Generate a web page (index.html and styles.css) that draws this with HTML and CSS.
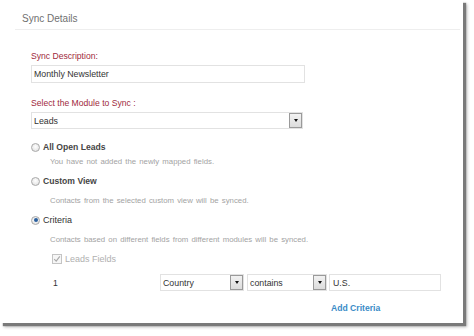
FILE: index.html
```html
<!DOCTYPE html>
<html>
<head>
<meta charset="utf-8">
<link rel="stylesheet" href="styles.css">
</head>
<body>
<div class="panel">
  <div class="header"><span class="title">Sync Details</span></div>
  <div class="form">
    <div class="label first">Sync Description:</div>
    <div class="input wide"><span>Monthly Newsletter</span></div>
    <div class="label second">Select the Module to Sync :</div>
    <div class="select module"><span class="val">Leads</span><span class="arrow"></span></div>

    <div class="radio-row r1"><span class="radio"></span><span class="rlabel">All Open Leads</span></div>
    <div class="desc">You have not added the newly mapped fields.</div>

    <div class="radio-row r2"><span class="radio"></span><span class="rlabel">Custom View</span></div>
    <div class="desc d2">Contacts from the selected custom view will be synced.</div>

    <div class="radio-row r2"><span class="radio checked"></span><span class="rlabel normal">Criteria</span></div>
    <div class="desc d3">Contacts based on different fields from different modules will be synced.</div>

    <div class="check-row"><span class="check"><svg width="8" height="8" viewBox="0 0 8 8"><path d="M1.2 4.2 L3.2 6.2 L6.8 1.4" fill="none" stroke="#a8a8a8" stroke-width="1.1"/></svg></span><span class="clabel">Leads Fields</span></div>

    <div class="crit-row">
      <span class="num">1</span>
      <div class="select country"><span class="val">Country</span><span class="arrow"></span></div>
      <div class="select contains"><span class="val">contains</span><span class="arrow"></span></div>
      <div class="input us"><span>U.S.</span></div>
    </div>
    <div class="add"><span>Add Criteria</span></div>
  </div>
</div>
</body>
</html>
```
FILE: styles.css
```css
html, body {
  margin: 0;
  padding: 0;
  background: #ffffff;
}
body {
  font-family: "Liberation Sans", Arial, sans-serif;
  width: 474px;
  height: 336px;
  overflow: hidden;
}
.panel {
  width: 463px;
  height: 323px;
  background: #ffffff;
  box-shadow: 3px 3px 1px #7a7a7a, 4px 4px 3px #b5b5b5;
}
.header {
  margin: 0 3px 0 15px;
  padding: 13px 0 4px 7px;
  height: 12px;
  border-bottom: 1px solid #eeeeee;
}
.title {
  font-size: 10px;
  line-height: 12px;
  color: #707070;
  display: block;
}
.form {
  padding-left: 31px;
  display: flex;
  flex-direction: column;
}
.label {
  font-size: 8.6px;
  line-height: 12px;
  height: 12px;
  color: #a02a3c;
}
.label.first { margin-top: 20px; }
.label.second { margin-top: 14px; }
.input, .select {
  box-sizing: border-box;
  border: 1px solid #e2e2e2;
  background: #fff;
  display: flex;
  align-items: center;
  font-size: 8.8px;
  color: #333;
}
.input.wide, .select.module { margin-top: 3px; }
.input.wide {
  width: 274px;
  height: 18px;
  padding-left: 2px;
}
.select {
  height: 17px;
  padding-left: 2px;
}
.select.module { width: 272px; }
.select .val { flex: 1; }
.arrow {
  box-sizing: border-box;
  width: 13px;
  height: 15px;
  border: 1px solid #9a9a9a;
  background: linear-gradient(#f2f2f2, #dcdcdc);
  display: flex;
  align-items: center;
  justify-content: center;
}
.arrow::after {
  content: "";
  width: 0;
  height: 0;
  border-left: 2.5px solid transparent;
  border-right: 2.5px solid transparent;
  border-top: 3px solid #111;
}
.radio-row {
  display: flex;
  align-items: center;
  height: 12px;
}
.radio-row.r1 { margin-top: 12px; }
.radio-row.r2 { margin-top: 8px; }
.radio {
  box-sizing: border-box;
  width: 9px;
  height: 9px;
  border-radius: 50%;
  border: 1px solid #a9a9a9;
  background: radial-gradient(circle at 50% 40%, #ffffff, #dcdcdc);
  margin-right: 3px;
  display: flex;
  align-items: center;
  justify-content: center;
}
.radio.checked::after {
  content: "";
  width: 4px;
  height: 4px;
  border-radius: 50%;
  background: #2a5f9e;
}
.rlabel {
  font-size: 8.6px;
  font-weight: bold;
  color: #454545;
}
.rlabel.normal {
  font-weight: normal;
  font-size: 9px;
  color: #333;
}
.desc {
  margin-top: 4px;
  margin-left: 19px;
  height: 10px;
  line-height: 10px;
  font-size: 7.8px;
  color: #a3a3a3;
  word-spacing: 1px;
}
.desc.d2 { margin-top: 9px; }
.desc.d3 { margin-top: 9px; }
.check-row {
  margin-top: 8px;
  margin-left: 21px;
  height: 12px;
  display: flex;
  align-items: center;
}
.check {
  box-sizing: border-box;
  width: 10px;
  height: 10px;
  border: 1px solid #c4c4c4;
  background: #f6f6f6;
  display: flex;
  align-items: center;
  justify-content: center;
  margin-right: 3px;
}
.clabel {
  font-size: 9px;
  color: #b0b0b0;
}
.crit-row {
  margin-top: 9px;
  display: flex;
  align-items: center;
  height: 17px;
}
.num {
  width: 129px;
  padding-left: 22px;
  box-sizing: border-box;
  font-size: 8.6px;
  color: #333;
}
.select.country {
  width: 84px;
  margin-right: 3px;
}
.select.contains {
  width: 80px;
  margin-right: 2px;
}
.input.us {
  width: 112px;
  height: 17px;
  padding-left: 3px;
}
.add {
  margin-top: 11px;
  height: 12px;
  line-height: 12px;
  padding-left: 300px;
  font-size: 8.6px;
  font-weight: bold;
  color: #3a8cc7;
}
```
